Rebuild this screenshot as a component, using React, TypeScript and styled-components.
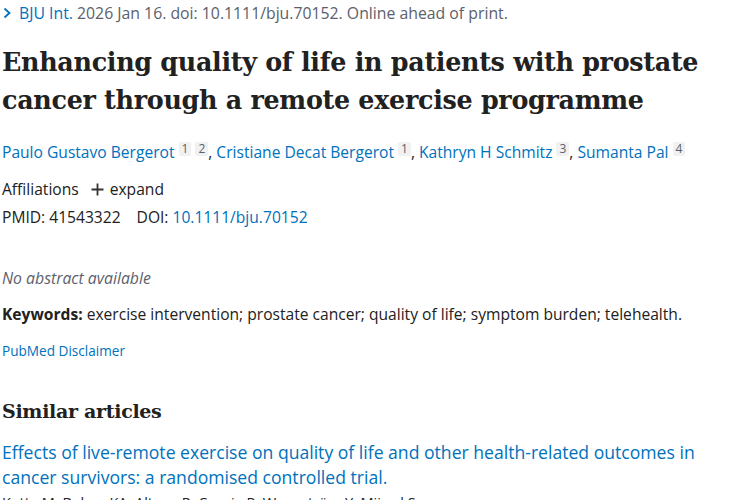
import React from "react";
import styled, { createGlobalStyle } from "styled-components";

const Global = createGlobalStyle`
  html, body { margin: 0; padding: 0; background: #fff; }
  body { font-family: "Open Sans", "Liberation Sans", sans-serif; color: #212121; overflow: hidden; }
`;

const Page = styled.main`
  width: 750px;
  height: 500px;
  overflow: hidden;
  padding: 0 0 0 2px;
  box-sizing: border-box;
`;

const Citation = styled.div`
  display: flex;
  align-items: center;
  gap: 7px;
  height: 26px;
  font-size: 15.8px;
  color: #5b616b;
  margin-left: 1px;
`;

const Link = styled.a`
  color: #0071bc;
  text-decoration: none;
`;

const Title = styled.h1`
  font-family: "DejaVu Serif", "Liberation Serif", serif;
  font-weight: 700;
  font-size: 25.4px;
  line-height: 38px;
  color: #212121;
  margin: 17px 0 0;
  letter-spacing: -0.3px;
`;

const Authors = styled.div`
  margin-top: 22px;
  font-size: 15.6px;
  line-height: 22px;
  color: #212121;
`;

const Sup = styled.sup`
  display: inline-block;
  background: #f1f1f1;
  color: #5b616b;
  font-size: 12px;
  line-height: 14px;
  padding: 0 3px;
  margin-left: 4px;
  vertical-align: 5px;
  border-radius: 2px;
`;

const InfoRow = styled.div<{ $top: number }>`
  display: flex;
  align-items: center;
  margin-top: ${(p) => p.$top}px;
  font-size: 15.6px;
  line-height: 20px;
  color: #212121;
`;

const Expand = styled.span`
  display: inline-flex;
  align-items: center;
  gap: 6px;
  margin-left: 12px;
`;

const Doi = styled.span`
  margin-left: 16px;
`;

const NoAbstract = styled.p`
  margin: 41px 0 0;
  font-style: italic;
  font-size: 15.8px;
  line-height: 20px;
  color: #5b616b;
`;

const Keywords = styled.p`
  margin: 16px 0 0;
  font-size: 15.6px;
  line-height: 20px;
  color: #212121;
  b { font-weight: 700; }
`;

const Disclaimer = styled.div`
  margin-top: 17px;
  font-size: 13.6px;
  line-height: 20px;
`;

const SectionTitle = styled.h2`
  font-family: "DejaVu Serif", "Liberation Serif", serif;
  font-weight: 700;
  font-size: 19px;
  line-height: 30px;
  margin: 35px 0 0;
  letter-spacing: -0.3px;
  color: #212121;
`;

const ArticleTitle = styled.a`
  display: block;
  margin-top: 14px;
  font-size: 17.6px;
  line-height: 25px;
  color: #0071bc;
  text-decoration: none;
`;

const ArticleAuthors = styled.div`
  margin-top: 4px;
  font-size: 14.5px;
  line-height: 18px;
  color: #212121;
`;

const Chevron = () => (
  <svg width="9" height="12" viewBox="0 0 9 12" fill="none">
    <path d="M1.5 1.5 L6.5 6 L1.5 10.5" stroke="#0071bc" strokeWidth="1.8" />
  </svg>
);

const Plus = () => (
  <svg width="13" height="13" viewBox="0 0 13 13">
    <path d="M6.5 0.5 V12.5 M0.5 6.5 H12.5" stroke="#333" strokeWidth="1.8" />
  </svg>
);

const authors: { name: string; refs: string[] }[] = [
  { name: "Paulo Gustavo Bergerot", refs: ["1", "2"] },
  { name: "Cristiane Decat Bergerot", refs: ["1"] },
  { name: "Kathryn H Schmitz", refs: ["3"] },
  { name: "Sumanta Pal", refs: ["4"] },
];

export default function App() {
  return (
    <>
      <Global />
      <Page>
        <Citation>
          <Chevron />
          <span>
            <Link>BJU Int.</Link> 2026 Jan 16. doi: 10.1111/bju.70152. Online ahead of print.
          </span>
        </Citation>
        <Title>
          Enhancing quality of life in patients with prostate cancer through a remote exercise programme
        </Title>
        <Authors>
          {authors.map((a, i) => (
            <React.Fragment key={a.name}>
              <Link>{a.name}</Link>
              {a.refs.map((r) => (
                <Sup key={r}>{r}</Sup>
              ))}
              {i < authors.length - 1 ? ", " : ""}
            </React.Fragment>
          ))}
        </Authors>
        <InfoRow $top={16}>
          <span>Affiliations</span>
          <Expand>
            <Plus />
            expand
          </Expand>
        </InfoRow>
        <InfoRow $top={8}>
          <span>PMID: 41543322</span>
          <Doi>
            DOI: <Link>10.1111/bju.70152</Link>
          </Doi>
        </InfoRow>
        <NoAbstract>No abstract available</NoAbstract>
        <Keywords>
          <b>Keywords:</b> exercise intervention; prostate cancer; quality of life; symptom burden; telehealth.
        </Keywords>
        <Disclaimer>
          <Link>PubMed Disclaimer</Link>
        </Disclaimer>
        <SectionTitle>Similar articles</SectionTitle>
        <ArticleTitle>
          Effects of live-remote exercise on quality of life and other health-related outcomes in cancer survivors: a randomised controlled trial.
        </ArticleTitle>
        <ArticleAuthors>Kotte M, Bolam KA, Altena R, Cornia P, Wengström Y, Mijwel S.</ArticleAuthors>
      </Page>
    </>
  );
}
